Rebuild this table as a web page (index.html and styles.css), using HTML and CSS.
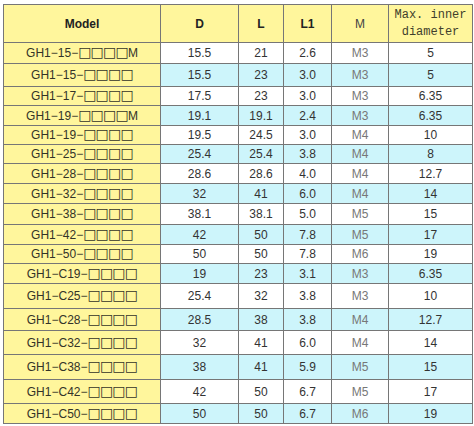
FILE: index.html
```html
<!DOCTYPE html>
<html>
<head>
<meta charset="utf-8">
<link rel="stylesheet" href="styles.css">
</head>
<body>
<table class="spec">
  <colgroup>
    <col class="c-model"><col class="c-d"><col class="c-l"><col class="c-l1"><col class="c-m"><col class="c-max">
  </colgroup>
  <thead>
    <tr class="h38">
      <th class="model">Model</th>
      <th>D</th>
      <th>L</th>
      <th>L1</th>
      <th class="thin">M</th>
      <th class="mono">Max. inner<br>diameter</th>
    </tr>
  </thead>
  <tbody>
    <tr class="h21"><td class="model">GH1−15−<span class="bx">□□□□</span>M</td><td>15.5</td><td>21</td><td>2.6</td><td class="m">M3</td><td>5</td></tr>
    <tr class="h23 alt"><td class="model">GH1−15−<span class="bx">□□□□</span></td><td>15.5</td><td>23</td><td>3.0</td><td class="m">M3</td><td>5</td></tr>
    <tr class="h19"><td class="model">GH1−17−<span class="bx">□□□□</span></td><td>17.5</td><td>23</td><td>3.0</td><td class="m">M3</td><td>6.35</td></tr>
    <tr class="h20 alt"><td class="model">GH1−19−<span class="bx">□□□□</span>M</td><td>19.1</td><td>19.1</td><td>2.4</td><td class="m">M3</td><td>6.35</td></tr>
    <tr class="h19"><td class="model">GH1−19−<span class="bx">□□□□</span></td><td>19.5</td><td>24.5</td><td>3.0</td><td class="m">M4</td><td>10</td></tr>
    <tr class="h19 alt"><td class="model">GH1−25−<span class="bx">□□□□</span></td><td>25.4</td><td>25.4</td><td>3.8</td><td class="m">M4</td><td>8</td></tr>
    <tr class="h20"><td class="model">GH1−28−<span class="bx">□□□□</span></td><td>28.6</td><td>28.6</td><td>4.0</td><td class="m">M4</td><td>12.7</td></tr>
    <tr class="h20 alt"><td class="model">GH1−32−<span class="bx">□□□□</span></td><td>32</td><td>41</td><td>6.0</td><td class="m">M4</td><td>14</td></tr>
    <tr class="h21"><td class="model">GH1−38−<span class="bx">□□□□</span></td><td>38.1</td><td>38.1</td><td>5.0</td><td class="m">M5</td><td>15</td></tr>
    <tr class="h20 alt"><td class="model">GH1−42−<span class="bx">□□□□</span></td><td>42</td><td>50</td><td>7.8</td><td class="m">M5</td><td>17</td></tr>
    <tr class="h19"><td class="model">GH1−50−<span class="bx">□□□□</span></td><td>50</td><td>50</td><td>7.8</td><td class="m">M6</td><td>19</td></tr>
    <tr class="h20 alt"><td class="model">GH1−C19−<span class="bx">□□□□</span></td><td>19</td><td>23</td><td>3.1</td><td class="m">M3</td><td>6.35</td></tr>
    <tr class="h25"><td class="model">GH1−C25−<span class="bx">□□□□</span></td><td>25.4</td><td>32</td><td>3.8</td><td class="m">M3</td><td>10</td></tr>
    <tr class="h22 alt"><td class="model">GH1−C28−<span class="bx">□□□□</span></td><td>28.5</td><td>38</td><td>3.8</td><td class="m">M4</td><td>12.7</td></tr>
    <tr class="h24"><td class="model">GH1−C32−<span class="bx">□□□□</span></td><td>32</td><td>41</td><td>6.0</td><td class="m">M4</td><td>14</td></tr>
    <tr class="h25 alt"><td class="model">GH1−C38−<span class="bx">□□□□</span></td><td>38</td><td>41</td><td>5.9</td><td class="m">M5</td><td>15</td></tr>
    <tr class="h24"><td class="model">GH1−C42−<span class="bx">□□□□</span></td><td>42</td><td>50</td><td>6.7</td><td class="m">M5</td><td>17</td></tr>
    <tr class="h20 alt"><td class="model">GH1−C50−<span class="bx">□□□□</span></td><td>50</td><td>50</td><td>6.7</td><td class="m">M6</td><td>19</td></tr>
  </tbody>
</table>
</body>
</html>
```

FILE: styles.css
```css
html, body {
  margin: 0;
  padding: 0;
  background: #ffffff;
}

body {
  padding: 4px 0 0 3px;
  font-family: "Liberation Sans", Arial, sans-serif;
  font-size: 12px;
  color: #333333;
}

.spec {
  border-collapse: collapse;
  table-layout: fixed;
  width: 469px;
  border: 1px solid #555555;
}

.c-model { width: 157px; }
.c-d { width: 78px; }
.c-l { width: 45px; }
.c-l1 { width: 48px; }
.c-m { width: 57px; }
.c-max { width: 84px; }

.spec th,
.spec td {
  border: 1px solid #767676;
  padding: 0;
  text-align: center;
  vertical-align: middle;
  line-height: 14px;
  white-space: nowrap;
}

.spec th {
  background: #fff69c;
  color: #222222;
  font-weight: bold;
  font-size: 12px;
}

.spec th.thin {
  font-weight: normal;
  color: #444444;
}

.spec th.mono {
  font-family: "Liberation Mono", "Courier New", monospace;
  font-weight: normal;
  font-size: 12px;
  line-height: 17px;
  color: #3f3f2c;
}

.spec td {
  background: #ffffff;
}

.spec tr.alt td {
  background: #cdf5fb;
}

.spec tr td.model,
.spec tr.alt td.model {
  background: #fff69c;
  color: #333328;
}

.spec td.m {
  color: #777777;
}

.bx {
  font-family: "DejaVu Sans", sans-serif;
  font-size: 14px;
  line-height: 10px;
  letter-spacing: -0.8px;
}

.h38 { height: 38px; }
.h19 { height: 19px; }
.h20 { height: 20px; }
.h21 { height: 21px; }
.h22 { height: 22px; }
.h23 { height: 23px; }
.h24 { height: 24px; }
.h25 { height: 25px; }
```
